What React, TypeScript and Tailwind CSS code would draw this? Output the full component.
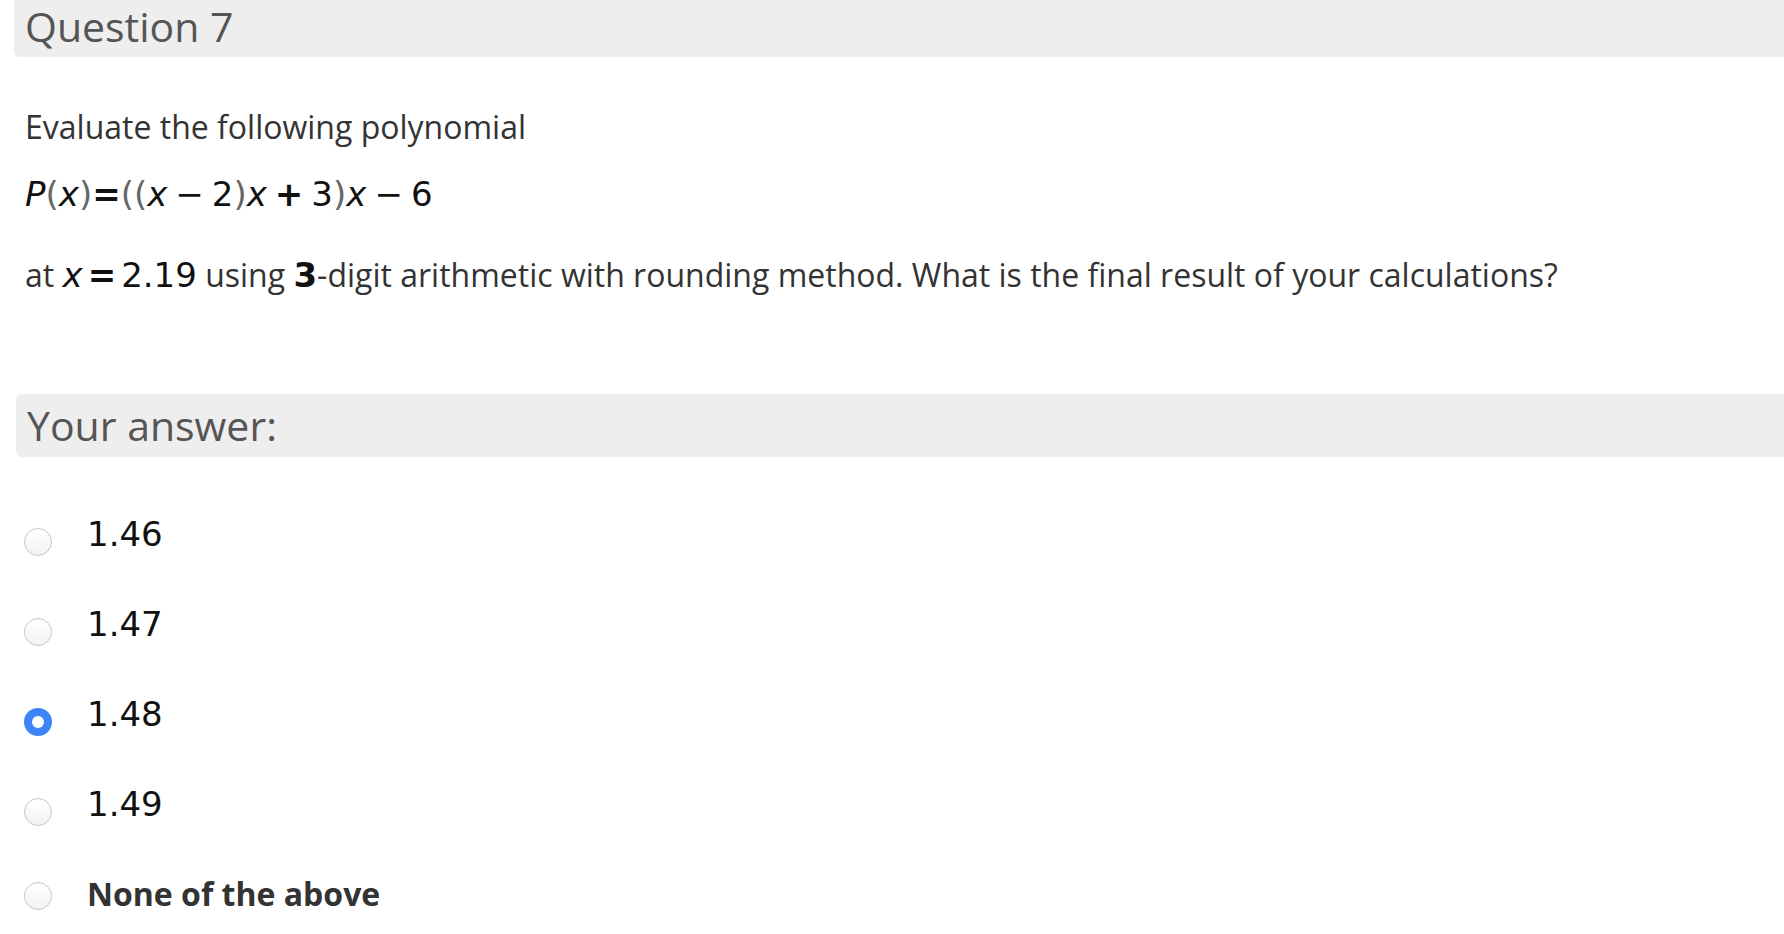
import { useState } from "react";

const OPTIONS = ["1.46", "1.47", "1.48", "1.49"];

function Radio({ checked }: { checked: boolean }) {
  if (checked) {
    return (
      <span className="w-[28px] h-[28px] rounded-full bg-[#3d85f6] flex items-center justify-center shrink-0">
        <span className="w-[12px] h-[12px] rounded-full bg-white" />
      </span>
    );
  }
  return <span className="block w-[28px] h-[28px] rounded-full border border-[#c6c6c6] bg-gradient-to-b from-white to-[#f3f3f3] shrink-0" />;
}

const math = { fontFamily: '"DejaVu Sans", Verdana, sans-serif' };

export default function App() {
  const [picked, setPicked] = useState("1.48");

  return (
    <div className="w-full min-h-screen bg-white text-[#333]" style={{ fontFamily: '"Open Sans", "Liberation Sans", sans-serif' }}>
      <div className="ml-[14px] h-[57px] bg-[#eeeeee] rounded-bl-[6px] pl-[11px] text-[41px] leading-[53px] text-[#555]">Question 7</div>

      <div className="pl-[25px]">
        <p className="mt-[46px] text-[32px] leading-[48px]">Evaluate the following polynomial</p>

        <div className="mt-[19px] h-[48px] text-[34px] leading-[48px] text-[#111] flex items-baseline" style={math}>
          <span className="italic">P</span>
          <span className="text-[#666]">(</span>
          <span className="italic">x</span>
          <span className="text-[#666]">)</span>
          <span className="font-bold">=</span>
          <span className="text-[#666]">((</span>
          <span className="italic">x</span>
          <span className="mx-[8px]">−</span>
          <span>2</span>
          <span className="text-[#666]">)</span>
          <span className="italic">x</span>
          <span className="mx-[8px] font-bold">+</span>
          <span>3</span>
          <span className="text-[#666]">)</span>
          <span className="italic">x</span>
          <span className="mx-[8px]">−</span>
          <span>6</span>
        </div>

        <p className="mt-[33px] text-[32px] leading-[48px]">
          at{" "}
          <span className="text-[34px] text-[#111]" style={math}>
            <span className="italic">x</span>
            <span className="font-bold mx-[5px]">=</span>2.19
          </span>{" "}
          using{" "}
          <span className="text-[34px] text-[#111] font-bold" style={math}>3</span>
          -digit arithmetic with rounding method. What is the final result of your calculations?
        </p>
      </div>

      <div className="mt-[95px] ml-[16px] h-[63px] bg-[#eeeeee] rounded-l-[6px] pl-[11px] text-[41px] leading-[63px] text-[#555]">Your answer:</div>

      <div className="mt-[43px] pl-[24px]">
        {OPTIONS.map(o => (
          <div key={o} className="h-[90px] flex items-start cursor-pointer" onClick={() => setPicked(o)}>
            <span className="mt-[28px]"><Radio checked={picked === o} /></span>
            <span className="ml-[35px] mt-[14px] text-[34px] leading-[40px] text-[#111]" style={math}>{o}</span>
          </div>
        ))}
        <div className="h-[74px] flex items-start cursor-pointer" onClick={() => setPicked("none")}>
          <span className="mt-[22px]"><Radio checked={picked === "none"} /></span>
          <span className="ml-[35px] mt-[14px] text-[32px] leading-[40px] font-bold text-[#333]">None of the above</span>
        </div>
      </div>
    </div>
  );
}
